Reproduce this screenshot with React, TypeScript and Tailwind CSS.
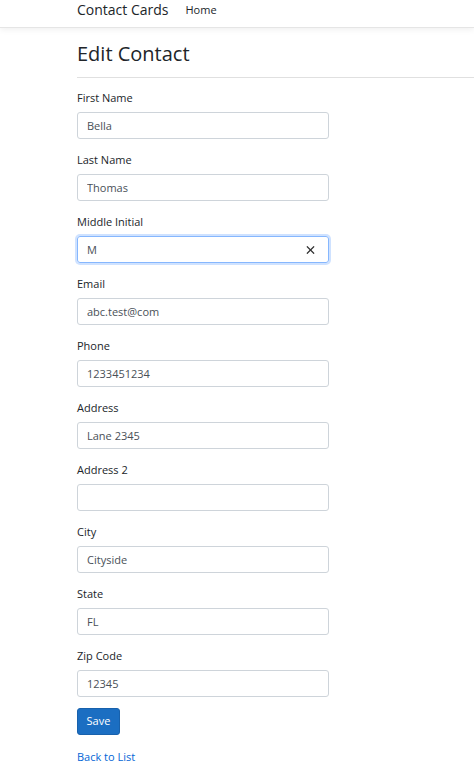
import React, { useState } from 'react';
import { X } from 'lucide-react';

const fields = [
  { label: 'First Name', value: 'Bella' },
  { label: 'Last Name', value: 'Thomas' },
  { label: 'Middle Initial', value: 'M', focused: true },
  { label: 'Email', value: 'abc.test@com' },
  { label: 'Phone', value: '1233451234' },
  { label: 'Address', value: 'Lane 2345' },
  { label: 'Address 2', value: '' },
  { label: 'City', value: 'Cityside' },
  { label: 'State', value: 'FL' },
  { label: 'Zip Code', value: '12345' },
];

const App = () => {
  const [values, setValues] = useState(fields.map(f => f.value));

  return (
    <div className="min-h-screen bg-white text-[#212529]" style={{ fontFamily: '"Open Sans", "Noto Sans", sans-serif' }}>
      {/* Navbar */}
      <nav className="h-[28px] bg-white border-b border-[#e5e5e5] shadow-[0_2px_6px_rgba(0,0,0,0.06)] flex items-center pl-[77px] gap-[17px] pb-[8px]">
        <span className="text-[14px] leading-none text-[#212529]">Contact Cards</span>
        <span className="text-[11px] leading-none text-[#212529]">Home</span>
      </nav>

      <div className="pl-[77px]">
        <h2 className="text-[20px] leading-[30px] font-normal mt-[11px] mb-[8px]">Edit Contact</h2>
        <hr className="border-t border-[#e0e0e0] mb-[11px]" />

        <form className="flex flex-col gap-[12px] w-[252px]" onSubmit={e => e.preventDefault()}>
          {fields.map((f, i) => (
            <div key={f.label} className="flex flex-col gap-[6px]">
              <label className="text-[11px] leading-[17px]">{f.label}</label>
              <div className="relative">
                <input
                  value={values[i]}
                  onChange={e => setValues(v => v.map((x, j) => (j === i ? e.target.value : x)))}
                  className={`w-full h-[27px] rounded-[3px] px-[9px] text-[11px] text-[#495057] outline-none ${f.focused ? 'border border-[#86b7fe] shadow-[0_0_0_2px_rgba(13,110,253,0.2)]' : 'border border-[#ced4da]'}`}
                />
                {f.focused && (
                  <X size={13} strokeWidth={2.2} className="absolute right-[12px] top-1/2 -translate-y-1/2 text-[#333]" />
                )}
              </div>
            </div>
          ))}

          <div className="-mt-[1px] flex">
            <button type="submit" className="h-[27px] w-[43px] rounded-[3px] bg-[#1b6ec2] border border-[#1861ac] text-white text-[11px]">
              Save
            </button>
          </div>
        </form>

        <div className="mt-[13px] text-[11px] leading-[17px]">
          <a href="#" className="text-[#0366d6]">Back to List</a>
        </div>
      </div>
    </div>
  );
};

export default App;
